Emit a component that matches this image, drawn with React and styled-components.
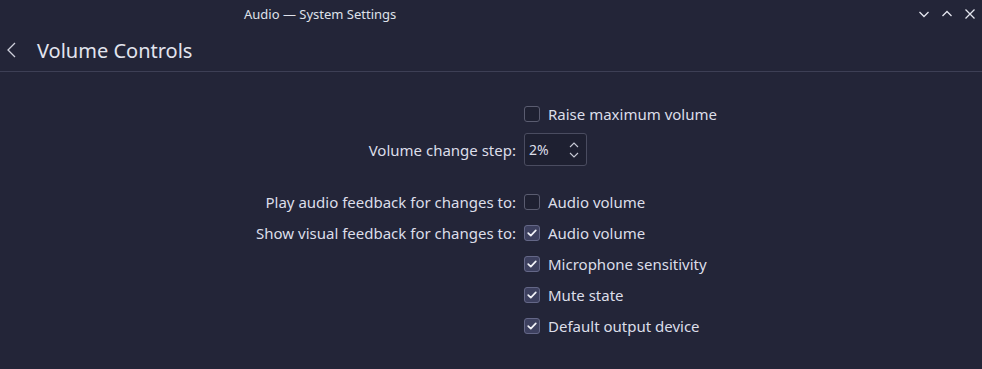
import React, { useState } from "react";
import styled, { createGlobalStyle } from "styled-components";

const GlobalStyle = createGlobalStyle`
  html, body {
    margin: 0;
    padding: 0;
    background: #232538;
  }
  body {
    font-family: "Noto Sans", "Open Sans", sans-serif;
    color: #dcdee9;
  }
`;

const Window = styled.div`
  width: 982px;
  height: 369px;
  background: #232538;
  display: flex;
  flex-direction: column;
  overflow: hidden;
`;

const TitleBar = styled.div`
  height: 27px;
  display: flex;
  align-items: center;
`;

const WindowTitle = styled.div`
  margin-left: 244px;
  font-size: 13px;
  color: #dfe1ea;
  flex: 1;
`;

const WinButtons = styled.div`
  display: flex;
  gap: 11px;
  margin-right: 6px;
`;

const WinButton = styled.button`
  width: 12px;
  height: 12px;
  padding: 0;
  border: none;
  background: none;
  color: #e3e5ee;
  display: flex;
  align-items: center;
  justify-content: center;
`;

const Header = styled.div`
  height: 44px;
  display: flex;
  align-items: center;
  border-bottom: 1px solid #3d3f55;
`;

const BackButton = styled.button`
  width: 22px;
  height: 22px;
  margin: 1px 0 0 1px;
  padding: 0;
  border: none;
  background: none;
  color: #cfd1dc;
  display: flex;
  align-items: center;
  justify-content: center;
`;

const PageTitle = styled.h1`
  margin: 2px 0 0 14px;
  font-size: 20px;
  font-weight: 400;
  color: #e2e4ee;
`;

const Form = styled.div`
  display: grid;
  grid-template-columns: 516px auto;
  column-gap: 8px;
  padding-top: 26px;
  align-items: center;
`;

const Label = styled.div`
  text-align: right;
  font-size: 15px;
  white-space: nowrap;
  margin-top: ${(p) => p.$mt || 0}px;
`;

const Field = styled.div`
  display: flex;
  align-items: center;
  height: ${(p) => p.$h || 31}px;
  margin-top: ${(p) => p.$mt || 0}px;
`;

const CheckRow = styled.label`
  display: flex;
  align-items: center;
  gap: 8px;
  font-size: 15px;
  cursor: pointer;
`;

const Box = styled.span`
  width: 16px;
  height: 16px;
  box-sizing: border-box;
  border-radius: 3px;
  border: 1px solid ${(p) => (p.$checked ? "#646787" : "#5a5c70")};
  background: ${(p) => (p.$checked ? "#3d405f" : "#1f2132")};
  display: flex;
  align-items: center;
  justify-content: center;
`;

const SpinBox = styled.div`
  width: 63px;
  height: 33px;
  box-sizing: border-box;
  border: 1px solid #4a4c60;
  border-radius: 3px;
  background: #1e2031;
  display: flex;
  align-items: center;
  justify-content: space-between;
  padding: 0 7px 0 4px;
  font-size: 14px;
`;

const Arrows = styled.div`
  display: flex;
  flex-direction: column;
  gap: 4px;
  color: #c8cad6;
`;

const Check = ({ checked, onToggle, children }) => (
  <CheckRow onClick={onToggle}>
    <Box $checked={checked}>
      {checked && (
        <svg width="12" height="12" viewBox="0 0 12 12">
          <path d="M2.2 6.2 L4.8 8.6 L9.8 3.4" fill="none" stroke="#f1f2f8" strokeWidth="1.7" strokeLinecap="round" strokeLinejoin="round" />
        </svg>
      )}
    </Box>
    <span>{children}</span>
  </CheckRow>
);

const App = () => {
  const [state, setState] = useState({
    raise: false,
    playAudio: false,
    showAudio: true,
    showMic: true,
    showMute: true,
    showDevice: true,
  });
  const toggle = (k) => () => setState((s) => ({ ...s, [k]: !s[k] }));

  return (
    <Window>
      <GlobalStyle />
      <TitleBar>
        <WindowTitle>Audio — System Settings</WindowTitle>
        <WinButtons>
          <WinButton>
            <svg width="12" height="12" viewBox="0 0 12 12">
              <path d="M1.5 4 L6 8.5 L10.5 4" fill="none" stroke="currentColor" strokeWidth="1.3" />
            </svg>
          </WinButton>
          <WinButton>
            <svg width="12" height="12" viewBox="0 0 12 12">
              <path d="M1.5 8 L6 3.5 L10.5 8" fill="none" stroke="currentColor" strokeWidth="1.3" />
            </svg>
          </WinButton>
          <WinButton>
            <svg width="12" height="12" viewBox="0 0 12 12">
              <path d="M1.5 1.5 L10.5 10.5 M10.5 1.5 L1.5 10.5" fill="none" stroke="currentColor" strokeWidth="1.3" />
            </svg>
          </WinButton>
        </WinButtons>
      </TitleBar>
      <Header>
        <BackButton>
          <svg width="14" height="18" viewBox="0 0 14 18">
            <path d="M10 2 L3 9 L10 16" fill="none" stroke="currentColor" strokeWidth="1.3" />
          </svg>
        </BackButton>
        <PageTitle>Volume Controls</PageTitle>
      </Header>
      <Form>
        <Label />
        <Field>
          <Check checked={state.raise} onToggle={toggle("raise")}>Raise maximum volume</Check>
        </Field>

        <Label>Volume change step:</Label>
        <Field $h={41}>
          <SpinBox>
            <span>2%</span>
            <Arrows>
              <svg width="10" height="6" viewBox="0 0 10 6">
                <path d="M1 5 L5 1 L9 5" fill="none" stroke="currentColor" strokeWidth="1.1" />
              </svg>
              <svg width="10" height="6" viewBox="0 0 10 6">
                <path d="M1 1 L5 5 L9 1" fill="none" stroke="currentColor" strokeWidth="1.1" />
              </svg>
            </Arrows>
          </SpinBox>
        </Field>

        <Label $mt={16}>Play audio feedback for changes to:</Label>
        <Field $mt={16}>
          <Check checked={state.playAudio} onToggle={toggle("playAudio")}>Audio volume</Check>
        </Field>

        <Label>Show visual feedback for changes to:</Label>
        <Field>
          <Check checked={state.showAudio} onToggle={toggle("showAudio")}>Audio volume</Check>
        </Field>

        <Label />
        <Field>
          <Check checked={state.showMic} onToggle={toggle("showMic")}>Microphone sensitivity</Check>
        </Field>

        <Label />
        <Field>
          <Check checked={state.showMute} onToggle={toggle("showMute")}>Mute state</Check>
        </Field>

        <Label />
        <Field>
          <Check checked={state.showDevice} onToggle={toggle("showDevice")}>Default output device</Check>
        </Field>
      </Form>
    </Window>
  );
};

export default App;
